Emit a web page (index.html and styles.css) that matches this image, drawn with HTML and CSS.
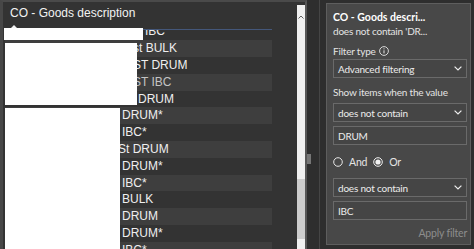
FILE: index.html
```html
<!DOCTYPE html>
<html lang="en">
<head>
    <meta charset="UTF-8">
    <meta name="viewport" content="width=device-width, initial-scale=1.0">
    <title>Goods description filter</title>
    <link rel="stylesheet" href="styles.css">
</head>
<body>
    <div class="visual">
        <div class="table">
            <div class="table-head">
                <div class="col-title">CO - Goods description</div>
                <div class="sort-arrow"></div>
            </div>
            <div class="table-body">
                <div class="rows">
                    <div class="row in-a">IBC</div>
                    <div class="row in-b">st BULK</div>
                    <div class="row in-b">ST DRUM</div>
                    <div class="row in-b dim">ST IBC</div>
                    <div class="row in-c">DRUM</div>
                    <div class="row">DRUM*</div>
                    <div class="row">IBC*</div>
                    <div class="row in-d">St DRUM</div>
                    <div class="row">DRUM*</div>
                    <div class="row">IBC*</div>
                    <div class="row">BULK</div>
                    <div class="row">DRUM</div>
                    <div class="row">DRUM*</div>
                    <div class="row">IBC*</div>
                </div>
            </div>
            <!-- redacted cells -->
            <div class="redact r1"></div>
            <div class="redact r2"></div>
            <div class="redact r3"></div>
        </div>
        <div class="scrollbar">
            <div class="scroll-up">
                <svg width="6" height="4" viewBox="0 0 6 4"><polyline points="0.5,3.5 3,1 5.5,3.5" fill="none" stroke="#606060" stroke-width="1"/></svg>
            </div>
            <div class="scroll-thumb"></div>
        </div>
    </div>

    <div class="pane">
        <div class="pane-scroll"><div class="pane-thumb"></div></div>
        <div class="pane-inner">
            <div class="card">
                <div class="card-title">CO - Goods descri...</div>
                <div class="card-sub">does not contain 'DR...</div>

                <div class="label first">Filter type
                    <svg class="info" width="10" height="10" viewBox="0 0 10 10"><circle cx="5" cy="5" r="4.4" fill="none" stroke="#e6e6e6" stroke-width="0.9"/><line x1="5" y1="4.3" x2="5" y2="7.4" stroke="#e6e6e6" stroke-width="1"/><circle cx="5" cy="2.8" r="0.6" fill="#e6e6e6"/></svg>
                </div>
                <div class="field select s1">
                    <span>Advanced filtering</span>
                    <svg width="8" height="5" viewBox="0 0 8 5"><polyline points="0.6,0.6 4,4 7.4,0.6" fill="none" stroke="#eeeeee" stroke-width="1.2"/></svg>
                </div>

                <div class="label show">Show items when the value</div>
                <div class="field select s2">
                    <span>does not contain</span>
                    <svg width="8" height="5" viewBox="0 0 8 5"><polyline points="0.6,0.6 4,4 7.4,0.6" fill="none" stroke="#eeeeee" stroke-width="1.2"/></svg>
                </div>
                <div class="field text-in">DRUM</div>

                <div class="radios">
                    <svg width="10" height="10" viewBox="0 0 10 10"><circle cx="5" cy="5" r="4.3" fill="none" stroke="#e6e6e6" stroke-width="1"/></svg>
                    <span class="radio-label">And</span>
                    <svg width="10" height="10" viewBox="0 0 10 10"><circle cx="5" cy="5" r="4.3" fill="none" stroke="#f2f2f2" stroke-width="1"/><circle cx="5" cy="5" r="2.6" fill="#f2f2f2"/></svg>
                    <span class="radio-label">Or</span>
                </div>

                <div class="field select s3">
                    <span>does not contain</span>
                    <svg width="8" height="5" viewBox="0 0 8 5"><polyline points="0.6,0.6 4,4 7.4,0.6" fill="none" stroke="#eeeeee" stroke-width="1.2"/></svg>
                </div>
                <div class="field text-in">IBC</div>

                <div class="apply">Apply filter</div>
            </div>
        </div>
    </div>
</body>
</html>
```

FILE: styles.css
```css
body {
    margin: 0;
    width: 474px;
    height: 249px;
    overflow: hidden;
    display: flex;
    background-color: #2e2e2e;
    font-family: "Liberation Sans", Arial, sans-serif;
}

/* table visual */
.visual {
    display: flex;
    width: 302px;
    height: 247px;
    padding-top: 3px;
    border-top: 2px solid #4a4a4a;
    border-left: 3px solid #474747;
    border-right: 2px solid #575757;
    background-color: #333333;
}
.table {
    position: relative;
    width: 267px;
    margin-left: 2px;
    margin-right: 25px;
    display: flex;
    flex-direction: column;
}
.table-head {
    height: 25px;
    padding-left: 5px;
    border-bottom: 1px solid #44577a;
    box-sizing: border-box;
}
.col-title {
    font-size: 12px;
    line-height: 15px;
    color: #f2f2f2;
    padding-top: 1px;
}
.sort-arrow {
    width: 0;
    height: 0;
    margin: 4px 0 0 1px;
    border-left: 3px solid transparent;
    border-right: 3px solid transparent;
    border-bottom: 3px solid #f2f2f2;
}
.table-body {
    flex: 1;
    overflow: hidden;
}
.rows {
    margin-top: -6.8px;
}
.row {
    height: 16.83px;
    line-height: 16.83px;
    font-size: 12px;
    color: #efefef;
    padding-left: 117px;
    white-space: nowrap;
}
.row:nth-child(even) {
    background-color: #3e3e3e;
}
.in-a { padding-left: 140px; }
.in-b { padding-left: 128px; }
.in-c { padding-left: 133px; }
.in-d { padding-left: 113px; }
.dim { color: #c4c4c4; }

.redact {
    position: absolute;
    background-color: #ffffff;
}
.r1 { left: -1px; top: 23px; width: 139px; height: 12px; }
.r2 { left: 0; top: 37.5px; width: 132px; height: 62.5px; }
.r3 { left: 0; top: 103px; width: 115px; height: 150px; }

.scrollbar {
    width: 8px;
    display: flex;
    flex-direction: column;
    background-color: #f0f0f0;
}
.scroll-up {
    height: 14px;
    display: flex;
    justify-content: center;
    align-items: flex-end;
}
.scroll-thumb {
    margin-top: 160px;
    height: 60px;
    background-color: #cdcdcd;
}

/* filter pane */
.pane {
    flex: 1;
    display: flex;
    padding-top: 3px;
}
.pane-scroll {
    width: 4px;
    margin-right: 8px;
}
.pane-thumb {
    margin-top: 151px;
    height: 10px;
    background-color: #767676;
}
.pane-inner {
    border-left: 1px solid #454545;
    padding-left: 6px;
    margin-top: -3px;
    padding-top: 3px;
}
.card {
    width: 145px;
    height: 242px;
    box-sizing: border-box;
    border: 1px solid #5e5e5e;
    background-color: #484848;
    padding: 6px 3px 0 6px;
    display: flex;
    flex-direction: column;
    font-family: Lato, "Liberation Sans", sans-serif;
    font-size: 10px;
    letter-spacing: -0.2px;
    color: #e4e4e4;
}
.card-title {
    font-weight: bold;
    font-size: 10.5px;
    letter-spacing: 0;
    line-height: 14px;
    color: #ffffff;
}
.card-sub {
    line-height: 14px;
}
.label {
    line-height: 14px;
    display: flex;
    align-items: center;
}
.label.first { margin-top: 5.5px; }
.label.show { margin-top: 6.5px; }
.info {
    margin-left: 3px;
}
.field {
    height: 19px;
    box-sizing: border-box;
    border: 1px solid #6a6a6a;
    background-color: #454545;
    padding: 0 4px;
    display: flex;
    align-items: center;
    justify-content: space-between;
    color: #ececec;
    margin-top: 4px;
}
.s1 { margin-top: 1.5px; }
.s2 { margin-top: 4.5px; }
.s3 { margin-top: 9px; }
.radios {
    margin-top: 10px;
    height: 14px;
    display: flex;
    align-items: center;
}
.radio-label {
    margin: 0 6px 0 6px;
    font-size: 10.5px;
}
.apply {
    margin-top: 6px;
    line-height: 14px;
    text-align: right;
    color: #8d8d8d;
    font-size: 10.5px;
}
```
